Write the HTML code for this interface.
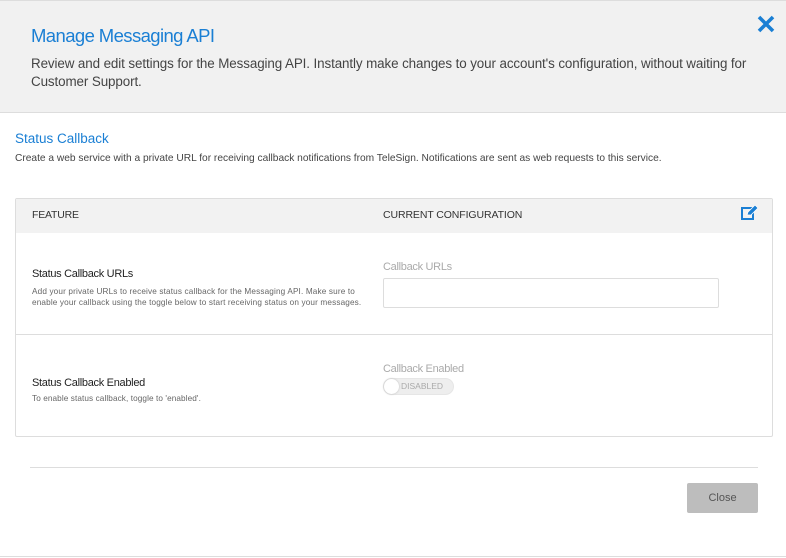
<!DOCTYPE html>
<html><head><style>
*{margin:0;padding:0;box-sizing:border-box}
body{width:786px;height:558px;background:#fff;font-family:"Liberation Sans",sans-serif;position:relative;overflow:hidden}
.abs{position:absolute;white-space:nowrap}
.hdr{position:absolute;left:0;top:0;width:786px;height:113px;background:#f1f1f1;border-bottom:1px solid #ddd;border-top:1px solid #ddd}
</style></head><body>
<div class="hdr"></div>
<div class="abs" style="left:31px;top:25px;font-size:18.5px;color:#1a7fd4;letter-spacing:-0.6px">Manage Messaging API</div>
<svg class="abs" style="left:757px;top:15px" width="18" height="18" viewBox="0 0 18 18"><path d="M2 2L16 16M16 2L2 16" stroke="#1a7fd4" stroke-width="3.6"/></svg>
<div class="abs" style="left:31px;top:55px;font-size:13.4px;color:#444;letter-spacing:-0.1px;line-height:18px">Review and edit settings for the Messaging API. Instantly make changes to your account's configuration, without waiting for<br>Customer Support.</div>
<div class="abs" style="left:15px;top:131px;font-size:13.5px;color:#1a7fd4;letter-spacing:0px">Status Callback</div>
<div class="abs" style="left:15px;top:153px;font-size:10.2px;color:#444;letter-spacing:0px">Create a web service with a private URL for receiving callback notifications from TeleSign. Notifications are sent as web requests to this service.</div>
<div style="position:absolute;left:15px;top:198px;width:758px;height:239px;border:1px solid #ddd;border-radius:2px">
 <div style="height:34px;background:#f2f2f2"></div>
 <div style="position:absolute;left:0;top:135px;width:100%;border-top:1px solid #ddd"></div>
</div>
<div class="abs" style="left:32px;top:209px;font-size:10.5px;color:#333;letter-spacing:-0.2px">FEATURE</div>
<div class="abs" style="left:383px;top:209px;font-size:10.5px;color:#333;letter-spacing:-0.1px">CURRENT CONFIGURATION</div>
<svg class="abs" style="left:741px;top:205px" width="17" height="15" viewBox="0 0 17 15"><rect x="1" y="3" width="11" height="11" fill="none" stroke="#1a7fd4" stroke-width="2"/><path d="M6 10L7 7L14 0L17 3L10 10Z" fill="#1a7fd4" stroke="#fff" stroke-width="0.8"/></svg>
<div class="abs" style="left:32px;top:268px;font-size:11px;color:#222;letter-spacing:-0.3px">Status Callback URLs</div>
<div class="abs" style="left:32px;top:286px;font-size:8.2px;color:#666;letter-spacing:0.15px;line-height:11px">Add your private URLs to receive status callback for the Messaging API. Make sure to<br>enable your callback using the toggle below to start receiving status on your messages.</div>
<div class="abs" style="left:383px;top:261px;font-size:11px;color:#aaa;letter-spacing:-0.3px">Callback URLs</div>
<div style="position:absolute;left:383px;top:278px;width:336px;height:30px;border:1px solid #ddd;border-radius:2px"></div>
<div class="abs" style="left:32px;top:377px;font-size:11px;color:#222;letter-spacing:-0.3px">Status Callback Enabled</div>
<div class="abs" style="left:32px;top:394px;font-size:8.2px;color:#666;letter-spacing:0.1px">To enable status callback, toggle to 'enabled'.</div>
<div class="abs" style="left:383px;top:363px;font-size:11px;color:#aaa;letter-spacing:-0.3px">Callback Enabled</div>
<div style="position:absolute;left:383px;top:378px;width:71px;height:17px;background:#eee;border-radius:9px;border:1px solid #e6e6e6"><div style="position:absolute;left:0;top:0;width:15px;height:15px;border-radius:50%;background:#fff;box-shadow:0 0 2px #bbb"></div><div class="abs" style="left:17px;top:2px;font-size:8.5px;color:#aaa">DISABLED</div></div>
<div style="position:absolute;left:30px;top:467px;width:728px;border-top:1px solid #ddd"></div>
<div style="position:absolute;left:687px;top:483px;width:71px;height:30px;background:#bdbdbd;border-radius:2px;font-size:11px;color:#555;text-align:center;line-height:30px">Close</div>
<div style="position:absolute;left:0;top:556px;width:786px;border-top:1px solid #ddd"></div>
</body></html>
